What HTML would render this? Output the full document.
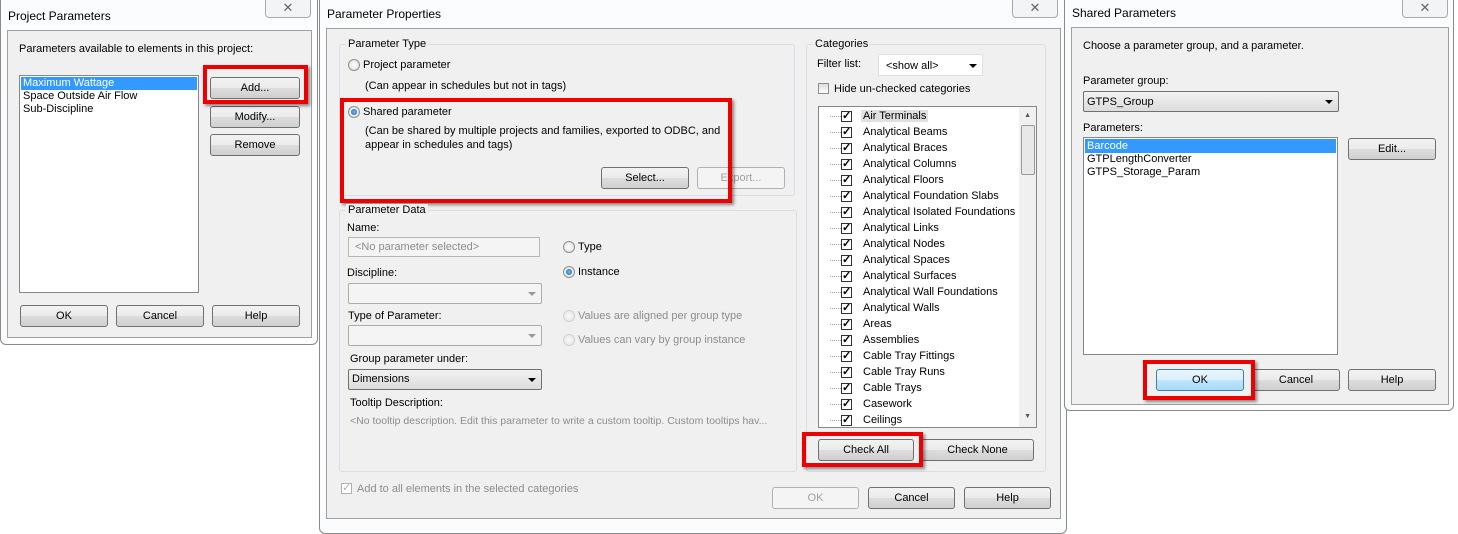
<!DOCTYPE html>
<html><head><style>
*{box-sizing:border-box;margin:0;padding:0}
body{width:1458px;height:525px;position:relative;background:#fff;font-family:"Liberation Sans",sans-serif;font-size:11px;color:#000;overflow:hidden}
.a{position:absolute}
.dlg{position:absolute;background:#fbfcfd;border:1px solid #8a8a8a;border-radius:6px}
.pan{position:absolute;background:#f0f0f0;border:1px solid #a0a0a0}
.ttl{position:absolute;font-size:12px}
.x{position:absolute;width:46px;height:18px;border:1px solid #a9a9a9;border-top:none;border-radius:0 0 4px 4px;background:#f3f4f6;color:#666;text-align:center;font-size:13px;line-height:16px}
.btn{position:absolute;height:22px;border:1px solid #707070;border-radius:3px;background:linear-gradient(#f2f2f2 0,#ebebeb 50%,#dddddd 51%,#cfcfcf 100%);text-align:center;line-height:20px}
.dis{border-color:#adb2b5;background:#f4f4f4;color:#a0a0a0}
.grp{position:absolute;border:1px solid #d5dfe5;border-radius:3px}
.gl{position:absolute;background:#f0f0f0;padding:0 2px;top:-7px;left:6px}
.red{position:absolute;border:4px solid #e00;box-shadow:2px 2px 3px rgba(0,0,0,.45)}
.list{position:absolute;background:#fff;border:1px solid #828790}
.sel{background:#3399ff;color:#fff}
.rad{position:absolute;width:12px;height:12px;border-radius:50%;border:1px solid #8e8f8f;background:radial-gradient(#fff,#dcdcdc)}
.rad.on::after{content:"";position:absolute;left:2px;top:2px;width:6px;height:6px;border-radius:50%;background:radial-gradient(#6fc0ff,#1a5c94)}
.rad.d{border-color:#c5c5c5;opacity:.7}
.cb{position:absolute;width:11px;height:11px;border:1px solid #333;background:#fff;font-size:11px;line-height:9px;text-align:center;font-weight:bold}
.combo{position:absolute;height:21px;border:1px solid #acacac;border-radius:2px;background:#f4f4f4}
.arr{position:absolute;right:5px;top:8px;width:0;height:0;border-left:4px solid transparent;border-right:4px solid transparent;border-top:4px solid #000}
.gray{color:#8d8d8d}
</style></head><body>

<!-- Left dialog -->
<div class="dlg" style="left:0;top:-6px;width:318px;height:351px"></div>
<div class="ttl" style="left:8px;top:9px">Project Parameters</div>
<div class="x" style="left:265px;top:0">✕</div>
<div class="pan" style="left:7px;top:30px;width:305px;height:308px"></div>
<div class="a" style="left:19px;top:43px">Parameters available to elements in this project:</div>
<div class="list" style="left:19px;top:75px;width:180px;height:218px">
 <div class="sel" style="margin:1px 1px 0 1px;padding-left:2px;height:13px;line-height:13px">Maximum Wattage</div>
 <div style="padding-left:3px;line-height:13px">Space Outside Air Flow</div>
 <div style="padding-left:3px;line-height:13px">Sub-Discipline</div>
</div>
<div class="btn" style="left:210px;top:77px;width:90px">Add...</div>
<div class="btn" style="left:210px;top:106px;width:90px">Modify...</div>
<div class="btn" style="left:210px;top:134px;width:90px">Remove</div>
<div class="red" style="left:203px;top:65px;width:105px;height:39px"></div>
<div class="btn" style="left:20px;top:305px;width:88px">OK</div>
<div class="btn" style="left:116px;top:305px;width:88px">Cancel</div>
<div class="btn" style="left:212px;top:305px;width:88px">Help</div>

<!-- Middle dialog -->
<div class="dlg" style="left:319px;top:-6px;width:748px;height:540px"></div>
<div class="ttl" style="left:327px;top:7px">Parameter Properties</div>
<div class="x" style="left:1012px;top:0">✕</div>
<div class="pan" style="left:326px;top:28px;width:735px;height:491px"></div>

<div class="grp" style="left:339px;top:44px;width:456px;height:152px"><span class="gl">Parameter Type</span></div>
<div class="rad" style="left:348px;top:59px"></div>
<div class="a" style="left:363px;top:59px">Project parameter</div>
<div class="a" style="left:365px;top:80px">(Can appear in schedules but not in tags)</div>
<div class="rad on" style="left:348px;top:106px"></div>
<div class="a" style="left:363px;top:106px">Shared parameter</div>
<div class="a" style="left:365px;top:124px;line-height:14px">(Can be shared by multiple projects and families, exported to ODBC, and<br>appear in schedules and tags)</div>
<div class="btn" style="left:601px;top:167px;width:88px">Select...</div>
<div class="btn dis" style="left:697px;top:167px;width:88px">Export...</div>
<div class="red" style="left:340px;top:98px;width:392px;height:105px"></div>

<div class="grp" style="left:339px;top:210px;width:458px;height:262px"><span class="gl">Parameter Data</span></div>
<div class="a" style="left:347px;top:222px">Name:</div>
<div class="a gray" style="left:348px;top:237px;width:192px;height:20px;border:1px solid #b5b5b5;background:#f4f4f4;padding:3px 0 0 6px">&lt;No parameter selected&gt;</div>
<div class="rad" style="left:563px;top:241px"></div><div class="a" style="left:578px;top:241px">Type</div>
<div class="rad on" style="left:563px;top:266px"></div><div class="a" style="left:578px;top:266px">Instance</div>
<div class="a" style="left:347px;top:267px">Discipline:</div>
<div class="combo" style="left:348px;top:283px;width:194px"><div class="arr" style="border-top-color:#999"></div></div>
<div class="a" style="left:348px;top:310px">Type of Parameter:</div>
<div class="combo" style="left:348px;top:325px;width:194px"><div class="arr" style="border-top-color:#999"></div></div>
<div class="rad d" style="left:563px;top:310px"></div><div class="a gray" style="left:578px;top:310px">Values are aligned per group type</div>
<div class="rad d" style="left:563px;top:334px"></div><div class="a gray" style="left:578px;top:334px">Values can vary by group instance</div>
<div class="a" style="left:350px;top:353px">Group parameter under:</div>
<div class="combo" style="left:348px;top:369px;width:194px;border-color:#707070;background:linear-gradient(#f2f2f2,#dcdcdc);padding:3px 0 0 3px">Dimensions<div class="arr"></div></div>
<div class="a" style="left:350px;top:397px">Tooltip Description:</div>
<div class="a gray" style="left:350px;top:415px;font-size:10.5px;white-space:nowrap">&lt;No tooltip description. Edit this parameter to write a custom tooltip. Custom tooltips hav...</div>

<div class="cb" style="left:341px;top:483px;border-color:#b0b0b0;color:#b0b0b0;font-weight:normal">✓</div>
<div class="a gray" style="left:357px;top:483px">Add to all elements in the selected categories</div>

<div class="btn dis" style="left:772px;top:487px;width:87px">OK</div>
<div class="btn" style="left:868px;top:487px;width:87px">Cancel</div>
<div class="btn" style="left:964px;top:487px;width:87px">Help</div>

<div class="grp" style="left:806px;top:44px;width:240px;height:428px"><span class="gl">Categories</span></div>
<div class="a" style="left:817px;top:58px">Filter list:</div>
<div class="a" style="left:878px;top:54px;width:105px;height:22px;background:#fff;border:1px solid #e0e0e0;padding:5px 0 0 7px">&lt;show all&gt;<div class="arr" style="top:9px"></div></div>
<div class="cb" style="left:818px;top:83px;border-color:#8e8f8f;background:linear-gradient(#ddd,#fff)"></div>
<div class="a" style="left:834px;top:83px">Hide un-checked categories</div>
<div class="list" style="left:818px;top:106px;width:219px;height:322px;overflow:hidden">
 <div class="a" style="right:0;top:0;width:17px;height:320px;background:#f0f0f0"></div>
 <div class="a" style="right:1px;top:18px;width:14px;height:50px;border:1px solid #9a9a9a;border-radius:2px;background:#e8e8e8"></div>
 <div class="a" style="right:5px;top:5px;font-size:7px;color:#555">▲</div>
 <div class="a" style="right:5px;top:306px;font-size:7px;color:#555">▼</div>
 <div id="cats"></div>
</div>
<div class="btn" style="left:818px;top:439px;width:96px">Check All</div>
<div class="btn" style="left:921px;top:439px;width:113px">Check None</div>
<div class="red" style="left:802px;top:432px;width:121px;height:35px"></div>

<!-- Right dialog -->
<div class="dlg" style="left:1064px;top:-6px;width:390px;height:417px"></div>
<div class="ttl" style="left:1072px;top:6px">Shared Parameters</div>
<div class="x" style="left:1402px;top:0">✕</div>
<div class="pan" style="left:1071px;top:27px;width:378px;height:378px"></div>
<div class="a" style="left:1083px;top:40px">Choose a parameter group, and a parameter.</div>
<div class="a" style="left:1083px;top:75px">Parameter group:</div>
<div class="combo" style="left:1083px;top:91px;width:256px;border-color:#707070;background:linear-gradient(#f2f2f2,#dcdcdc);padding:4px 0 0 3px">GTPS_Group<div class="arr" style="top:8px"></div></div>
<div class="a" style="left:1083px;top:122px">Parameters:</div>
<div class="list" style="left:1083px;top:137px;width:255px;height:218px">
 <div class="sel" style="margin:1px 1px 0 1px;padding-left:2px;height:14px;line-height:14px">Barcode</div>
 <div style="padding-left:3px;line-height:13px">GTPLengthConverter</div>
 <div style="padding-left:3px;line-height:13px">GTPS_Storage_Param</div>
</div>
<div class="btn" style="left:1348px;top:138px;width:88px">Edit...</div>
<div class="btn" style="left:1156px;top:369px;width:88px;border-color:#3c7fb1;background:linear-gradient(#eaf6fd,#d9f0fc 50%,#bee6fd 51%,#a7d9f5)">OK</div>
<div class="btn" style="left:1252px;top:369px;width:88px">Cancel</div>
<div class="btn" style="left:1348px;top:369px;width:88px">Help</div>
<div class="red" style="left:1143px;top:360px;width:112px;height:40px"></div>

<script>
var n=["Air Terminals","Analytical Beams","Analytical Braces","Analytical Columns","Analytical Floors","Analytical Foundation Slabs","Analytical Isolated Foundations","Analytical Links","Analytical Nodes","Analytical Spaces","Analytical Surfaces","Analytical Wall Foundations","Analytical Walls","Areas","Assemblies","Cable Tray Fittings","Cable Tray Runs","Cable Trays","Casework","Ceilings"];
var h="";n.forEach(function(t,i){var y=3+i*16;
h+='<div class="a" style="left:11px;top:'+(y+6)+'px;width:11px;border-top:1px dotted #999"></div>'+
'<div class="cb" style="left:22px;top:'+(y+1)+'px">✓</div>'+
'<div class="a" style="left:42px;top:'+y+'px;padding:0 2px;'+(i==0?'background:#e0e0e0;':'')+'">'+t+'</div>';});
document.getElementById("cats").innerHTML=h;
</script>
</body></html>
